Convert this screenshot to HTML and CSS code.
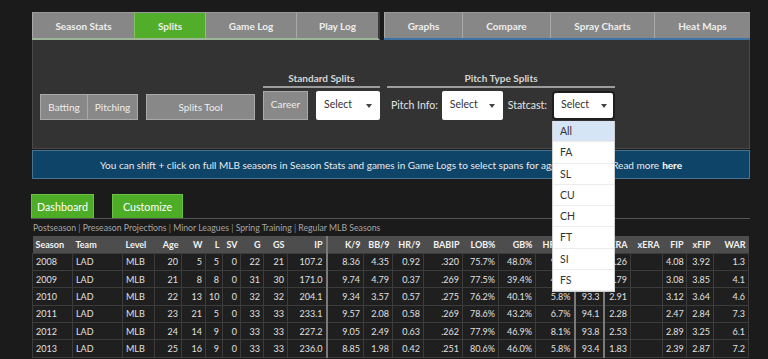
FILE: index.html
```html
<!DOCTYPE html>
<html>
<head>
<meta charset="utf-8">
<link rel="stylesheet" href="styles.css">
</head>
<body>
<div class="page">
  <nav class="tabs">
    <div class="tab-group left">
      <div class="tab w-season">Season Stats</div>
      <div class="tab active w-splits">Splits</div>
      <div class="tab w-game">Game Log</div>
      <div class="tab w-play">Play Log</div>
    </div>
    <div class="tab-group right">
      <div class="tab w-graphs">Graphs</div>
      <div class="tab w-compare">Compare</div>
      <div class="tab w-spray">Spray Charts</div>
      <div class="tab w-heat">Heat Maps</div>
    </div>
  </nav>

  <section class="panel">
    <div class="btn-pair">
      <div class="gbtn w-bat">Batting</div>
      <div class="gbtn w-pitch">Pitching</div>
    </div>
    <div class="gbtn w-tool">Splits Tool</div>
    <div class="group std">
      <div class="group-title">Standard Splits</div>
      <div class="group-row">
        <div class="gbtn tall w-career">Career</div>
        <div class="select w-sel1">Select<span class="caret"></span></div>
      </div>
    </div>
    <div class="group pitch">
      <div class="group-title">Pitch Type Splits</div>
      <div class="group-row">
        <span class="lbl lbl-info">Pitch Info:</span>
        <div class="select w-sel2">Select<span class="caret"></span></div>
        <span class="lbl lbl-sc">Statcast:</span>
        <div class="select-wrap">
          <div class="select focus w-sel3">Select<span class="caret"></span></div>
          <ul class="menu">
            <li class="hl">All</li>
            <li>FA</li>
            <li>SL</li>
            <li>CU</li>
            <li>CH</li>
            <li>FT</li>
            <li>SI</li>
            <li>FS</li>
          </ul>
        </div>
      </div>
    </div>
  </section>

  <div class="info">You can shift + click on full MLB seasons in Season Stats and games in Game Logs to select spans for aggregate stats. Read more <b>here</b></div>

  <div class="subtabs">
    <div class="sbtn w-dash">Dashboard</div>
    <div class="sbtn w-cust">Customize</div>
  </div>

  <div class="links">Postseason <span class="sep">|</span> Preseason Projections <span class="sep">|</span> Minor Leagues <span class="sep">|</span> Spring Training <span class="sep">|</span> Regular MLB Seasons</div>

  <table class="stats">
    <colgroup>
      <col class="c40"><col class="c50"><col class="c32"><col class="c27"><col class="c24"><col class="c17"><col class="c18"><col class="c23"><col class="c24"><col class="c39"><col class="c37"><col class="c29"><col class="c31"><col class="c39"><col class="c36"><col class="c37"><col class="c39"><col class="c29"><col class="c27"><col class="c32"><col class="c24"><col class="c27"><col class="c35">
    </colgroup>
    <thead>
      <tr>
        <th class="l">Season</th><th class="l">Team</th><th class="l">Level</th><th>Age</th><th>W</th><th>L</th><th>SV</th><th>G</th><th>GS</th><th class="gr">IP</th><th>K/9</th><th>BB/9</th><th>HR/9</th><th>BABIP</th><th>LOB%</th><th>GB%</th><th class="gr">HR/FB</th><th class="gr">vFA</th><th>ERA</th><th>xERA</th><th>FIP</th><th>xFIP</th><th>WAR</th>
      </tr>
    </thead>
    <tbody>
      <tr><td class="l">2008</td><td class="l">LAD</td><td class="l">MLB</td><td>20</td><td>5</td><td>5</td><td>0</td><td>22</td><td>21</td><td class="gr">107.2</td><td>8.36</td><td>4.35</td><td>0.92</td><td>.320</td><td>75.7%</td><td>48.0%</td><td class="gr">9.6%</td><td class="gr">94.1</td><td>4.26</td><td></td><td>4.08</td><td>3.92</td><td>1.3</td></tr>
      <tr><td class="l">2009</td><td class="l">LAD</td><td class="l">MLB</td><td>21</td><td>8</td><td>8</td><td>0</td><td>31</td><td>30</td><td class="gr">171.0</td><td>9.74</td><td>4.79</td><td>0.37</td><td>.269</td><td>77.5%</td><td>39.4%</td><td class="gr">4.1%</td><td class="gr">94.0</td><td>2.79</td><td></td><td>3.08</td><td>3.85</td><td>4.1</td></tr>
      <tr><td class="l">2010</td><td class="l">LAD</td><td class="l">MLB</td><td>22</td><td>13</td><td>10</td><td>0</td><td>32</td><td>32</td><td class="gr">204.1</td><td>9.34</td><td>3.57</td><td>0.57</td><td>.275</td><td>76.2%</td><td>40.1%</td><td class="gr">5.8%</td><td class="gr">93.3</td><td>2.91</td><td></td><td>3.12</td><td>3.64</td><td>4.6</td></tr>
      <tr><td class="l">2011</td><td class="l">LAD</td><td class="l">MLB</td><td>23</td><td>21</td><td>5</td><td>0</td><td>33</td><td>33</td><td class="gr">233.1</td><td>9.57</td><td>2.08</td><td>0.58</td><td>.269</td><td>78.6%</td><td>43.2%</td><td class="gr">6.7%</td><td class="gr">94.1</td><td>2.28</td><td></td><td>2.47</td><td>2.84</td><td>7.3</td></tr>
      <tr><td class="l">2012</td><td class="l">LAD</td><td class="l">MLB</td><td>24</td><td>14</td><td>9</td><td>0</td><td>33</td><td>33</td><td class="gr">227.2</td><td>9.05</td><td>2.49</td><td>0.63</td><td>.262</td><td>77.9%</td><td>46.9%</td><td class="gr">8.1%</td><td class="gr">93.8</td><td>2.53</td><td></td><td>2.89</td><td>3.25</td><td>6.1</td></tr>
      <tr><td class="l">2013</td><td class="l">LAD</td><td class="l">MLB</td><td>25</td><td>16</td><td>9</td><td>0</td><td>33</td><td>33</td><td class="gr">236.0</td><td>8.85</td><td>1.98</td><td>0.42</td><td>.251</td><td>80.6%</td><td>46.0%</td><td class="gr">5.8%</td><td class="gr">93.4</td><td>1.83</td><td></td><td>2.39</td><td>2.87</td><td>7.2</td></tr>
    </tbody>
  </table>
</div>
</body>
</html>
```

FILE: styles.css
```css
* { box-sizing: border-box; }
html, body { margin: 0; padding: 0; }
body {
  background: #1b1b1b;
  font-family: Lato, "Open Sans", sans-serif;
  color: #e6e6e6;
  width: 768px;
  height: 359px;
  overflow: hidden;
}
.page {
  margin-left: 32px;
  width: 718px;
  padding-top: 12px;
}

/* top tabs */
.tabs { display: flex; gap: 4px; height: 28px; }
.tab-group { display: flex; height: 28px; }
.tab-group.left { border-bottom: 2px solid #9fb59a; border-right: 2px solid #3a3a3a; }
.tab-group.right { border-bottom: 2px solid #3d74a6; flex: 1; }
.tab {
  background: #878787;
  border-left: 1px solid #a8a8a8;
  border-top: 1px solid #9a9a9a;
  color: #eeeeee;
  font-size: 10px;
  font-weight: 700;
  display: flex;
  align-items: center;
  justify-content: center;
  height: 26px;
  white-space: nowrap;
}
.tab.active { background: #52ad2a; border-left-color: #7cc35a; }
.w-season { width: 102px; }
.w-splits { width: 71px; }
.w-game { width: 91px; }
.w-play { width: 82px; }
.w-graphs { width: 78px; }
.w-compare { width: 88px; }
.w-spray { width: 104px; }
.w-heat { width: 96px; }

/* panel */
.panel {
  background: #333333;
  border: 1px solid #4a4a4a;
  border-top: none;
  height: 109px;
  display: flex;
  align-items: flex-end;
  padding: 0 0 28px 7px;
}
.btn-pair { display: flex; }
.gbtn {
  background: #888888;
  border: 1px solid #a9a9a9;
  color: #eeeeee;
  font-size: 10px;
  height: 26px;
  display: flex;
  align-items: center;
  justify-content: center;
  white-space: nowrap;
}
.gbtn.tall { height: 29px; padding-bottom: 3px; }
.w-bat { width: 48px; }
.w-pitch { width: 50px; border-left: none; }
.w-tool { width: 109px; margin-left: 8px; }
.w-career { width: 45px; }

.group { display: flex; flex-direction: column; }
.group.std { margin-left: 8px; width: 117px; }
.group.pitch { margin-left: 7px; width: 228px; }
.group-title {
  font-size: 10px;
  font-weight: 700;
  color: #d6d6d6;
  text-align: center;
  height: 17px;
  line-height: 14px;
  border-bottom: 2px solid #9c9c9c;
  margin-bottom: 3px;
  white-space: nowrap;
}
.group-row { display: flex; align-items: center; }
.std .group-row { gap: 8px; }
.lbl { font-size: 10.5px; color: #e4e4e4; white-space: nowrap; padding-bottom: 2px; }
.lbl-info { margin: 0 4px 0 4px; }
.lbl-sc { margin: 0 5px 0 5px; }

.select {
  background: #ffffff;
  color: #333333;
  font-size: 10.5px;
  height: 29px;
  border-radius: 2px;
  display: flex;
  align-items: center;
  padding: 0 0 3px 8px;
  position: relative;
  white-space: nowrap;
}
.caret {
  position: absolute;
  right: 8px;
  top: 13px;
  width: 0; height: 0;
  border-left: 3px solid transparent;
  border-right: 3px solid transparent;
  border-top: 4px solid #444;
}
.w-sel1 { width: 64px; }
.w-sel2 { width: 64px; }
.w-sel3 { width: 63px; }
.select.focus { border: 2px solid #1e1e1e; border-radius: 4px; padding-left: 7px; }
.select.focus .caret { right: 6px; top: 11px; }
.select-wrap { position: relative; }
.menu {
  position: absolute;
  top: 100%;
  left: 0;
  width: 63px;
  margin: 1px 0 0;
  padding: 0;
  list-style: none;
  background: #ffffff;
  z-index: 5;
  border: 1px solid #cfcfcf;
  border-top: none;
}
.menu li {
  height: 21.25px;
  line-height: 21px;
  font-size: 10.5px;
  color: #333;
  padding-left: 7px;
  border-bottom: 1px solid #ececec;
}
.menu li.hl { background: #d6e5f5; }

/* info bar */
.info {
  margin-top: 1px;
  height: 29px;
  background: #0e4468;
  border: 1px solid #4a7291;
  color: #eaeaea;
  font-size: 10px;
  display: flex;
  align-items: center;
  justify-content: center;
  white-space: nowrap;
}
.info b { font-weight: 700; color: #ffffff; margin-left: 3px; }

/* sub tabs */
.subtabs {
  margin-top: 15px;
  display: flex;
  gap: 18px;
  border-bottom: 1px solid #555;
  margin-left: -1px;
}
.sbtn {
  background: #4ead27;
  border: 1px solid #6cc046;
  border-bottom: none;
  color: #ffffff;
  font-size: 10.7px;
  height: 24px;
  display: flex;
  align-items: center;
  justify-content: center;
  white-space: nowrap;
}
.w-dash { width: 63px; }
.w-cust { width: 71px; }

.links {
  font-size: 8.7px;
  color: #a5a5a5;
  height: 17px;
  line-height: 17px;
  padding-left: 1px;
  white-space: nowrap;
}
.links .sep { color: #8a8a8a; }

/* table */
.stats {
  border-collapse: collapse;
  table-layout: fixed;
  width: 716px;
  font-size: 9px;
}
.c17 { width: 17px; } .c18 { width: 18px; } .c23 { width: 23px; } .c24 { width: 24px; }
.c27 { width: 27px; } .c29 { width: 29px; } .c31 { width: 31px; } .c32 { width: 32px; }
.c35 { width: 35px; } .c36 { width: 36px; } .c37 { width: 37px; } .c39 { width: 39px; }
.c40 { width: 40px; } .c50 { width: 50px; }
.stats th {
  background: #4d4d4d;
  color: #f2f2f2;
  font-weight: 700;
  height: 17px;
  text-align: right;
  padding: 0 3px;
  white-space: nowrap;
  overflow: hidden;
}
.stats td {
  background: #1f1f1f;
  color: #e0e0e0;
  border: 1px solid #3c3c3c;
  height: 17.4px;
  text-align: right;
  padding: 0 3px;
  white-space: nowrap;
  overflow: hidden;
}
.stats .l { text-align: left; }
.stats .gr { border-right: 2px solid #7a7a7a; }
```
